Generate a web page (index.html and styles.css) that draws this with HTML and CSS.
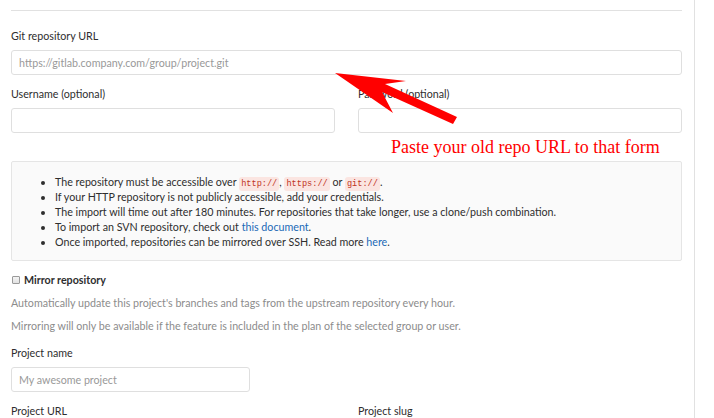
FILE: index.html
```html
<!DOCTYPE html>
<html lang="en">
<head>
  <meta charset="UTF-8" />
  <title>Import project</title>
  <link rel="stylesheet" href="styles.css">
</head>
<body>
  <div class="page">
    <main class="content">
      <hr class="rule">

      <div class="form-group">
        <label class="label">Git repository URL</label>
        <input class="input" type="text" placeholder="https://gitlab.company.com/group/project.git">
      </div>

      <div class="form-row">
        <div class="form-col">
          <label class="label">Username (optional)</label>
          <input class="input" type="text">
        </div>
        <div class="form-col">
          <label class="label">Password (optional)</label>
          <input class="input" type="password">
        </div>
      </div>

      <!-- Annotation added on top of the screenshot -->
      <div class="note">Paste your old repo URL to that form</div>

      <div class="info-box">
        <ul>
          <li>The repository must be accessible over <code>http://</code>, <code>https://</code> or <code>git://</code>.</li>
          <li>If your HTTP repository is not publicly accessible, add your credentials.</li>
          <li>The import will time out after 180 minutes. For repositories that take longer, use a clone/push combination.</li>
          <li>To import an SVN repository, check out <a href="#">this document</a>.</li>
          <li>Once imported, repositories can be mirrored over SSH. Read more <a href="#">here</a>.</li>
        </ul>
      </div>

      <label class="check-row"><span class="checkbox"></span>Mirror repository</label>
      <p class="help">Automatically update this project's branches and tags from the upstream repository every hour.</p>
      <p class="help">Mirroring will only be available if the feature is included in the plan of the selected group or user.</p>

      <div class="form-group name-group">
        <label class="label">Project name</label>
        <input class="input input-short" type="text" placeholder="My awesome project">
      </div>

      <div class="form-row">
        <div class="form-col"><label class="label">Project URL</label></div>
        <div class="form-col"><label class="label">Project slug</label></div>
      </div>

      <!-- Red arrow pointing at the URL field -->
      <svg class="arrow" width="140" height="60" viewBox="0 0 140 60">
        <polygon points="0,1 71,9 50,12 122,45 118,52 47,20 58,41" fill="#ff0000"/>
      </svg>
    </main>
    <aside class="sidebar"></aside>
  </div>
</body>
</html>
```

FILE: styles.css
```css
*, *::before, *::after {
  box-sizing: border-box;
}

html, body {
  margin: 0;
  padding: 0;
  height: 100%;
  overflow: hidden;
}

body {
  background: #ffffff;
  color: #2e2e2e;
  font-family: Lato, "Noto Sans", sans-serif;
  font-size: 10.7px;
}

.page {
  display: flex;
  height: 100vh;
}

/* Main form column */
.content {
  position: relative;
  width: 694px;
  padding: 10px 12px 0 11px;
}

.sidebar {
  flex: 1;
  border-left: 1px solid #e1e1e1;
}

.rule {
  margin: 0 0 17px;
  border: none;
  border-top: 1px solid #e1e1e1;
}

.label {
  display: block;
  line-height: 16px;
  margin-bottom: 6px;
  color: #2e2e2e;
}

.input {
  display: block;
  width: 100%;
  height: 25px;
  padding: 0 7px;
  border: 1px solid #dfdfdf;
  border-radius: 3px;
  font-family: inherit;
  font-size: 10.7px;
  color: #2e2e2e;
  background: #ffffff;
}

.input::placeholder {
  color: #999999;
}

.input-short {
  width: 239px;
}

.form-row {
  display: flex;
  gap: 23px;
  margin-top: 11px;
}

.form-col {
  flex: 1;
}

/* Annotation text */
.note {
  height: 28px;
  line-height: 28px;
  padding-left: 380px;
  color: #ff0000;
  font-family: "Liberation Serif", serif;
  font-size: 18px;
}

.info-box {
  height: 100px;
  padding: 12px 0 11px;
  background: #fafafa;
  border: 1px solid #e5e5e5;
  border-radius: 2px;
}

.info-box ul {
  margin: 0;
  padding-left: 43px;
}

.info-box li {
  height: 15px;
  line-height: 15px;
}

.info-box code {
  padding: 2px 2px;
  line-height: 1;
  background: #fbe5e1;
  color: #c0341d;
  border-radius: 3px;
  font-family: "Liberation Mono", monospace;
  font-size: 8.6px;
}

.info-box a {
  color: #1b69b6;
  text-decoration: none;
}

.check-row {
  display: flex;
  align-items: center;
  margin-top: 11px;
  line-height: 16px;
  font-weight: bold;
}

.checkbox {
  width: 8px;
  height: 8px;
  margin: 0 4px 0 1px;
  border: 1px solid #9a9a9a;
  border-radius: 1px;
  background: linear-gradient(#f4f4f4, #e2e2e2);
}

.help {
  margin: 7px 0 0;
  line-height: 16px;
  color: #8c8c8c;
}

.name-group {
  margin-top: 11px;
}

.arrow {
  position: absolute;
  left: 335px;
  top: 72px;
}
```
